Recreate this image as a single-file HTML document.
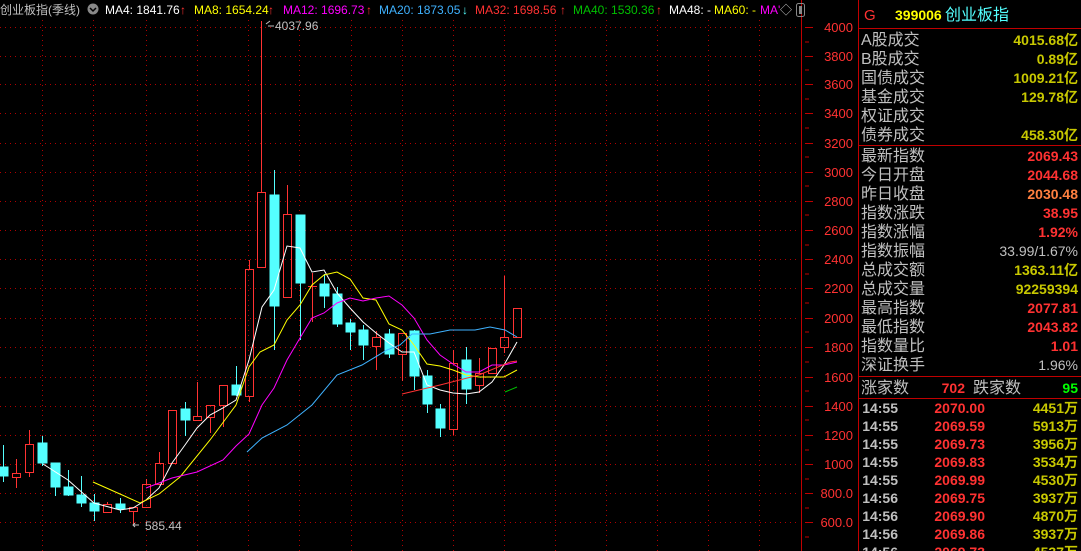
<!DOCTYPE html>
<html><head><meta charset="utf-8"><style>
html,body{margin:0;padding:0;background:#000;width:1081px;height:551px;overflow:hidden}
svg{display:block}
.h{font-family:"Liberation Sans","Noto Sans CJK SC",sans-serif;font-size:12px}
.lb{font-family:"Liberation Sans","Noto Sans CJK SC",sans-serif;font-size:16px;fill:#c0c0c0}
.v{font-family:"Liberation Sans","Noto Sans CJK SC",sans-serif;font-size:14px;font-weight:bold;text-anchor:end}
.ax{font-family:"Liberation Sans",sans-serif;font-size:13px;fill:#ff3232;text-anchor:end}
</style></head><body>
<svg width="1081" height="551" viewBox="0 0 1081 551" xmlns="http://www.w3.org/2000/svg">
<g stroke="#b00000" stroke-width="1" stroke-dasharray="1 4">
<path d="M0 27.5H800M0 56.5H800M0 84.5H800M0 113.5H800M0 143.5H800M0 172.5H800M0 201.5H800M0 230.5H800M0 259.5H800M0 288.5H800M0 318.5H800M0 347.5H800M0 377.5H800M0 406.5H800M0 435.5H800M0 464.5H800M0 493.5H800M0 522.5H800"/>
<path d="M42.5 20V551M93.5 20V551M146.5 20V551M197.5 20V551M248.5 20V551M299.5 20V551M351.5 20V551M402.5 20V551M453.5 20V551M504.5 20V551M555.5 20V551M606.5 20V551M657.5 20V551M708.5 20V551M759.5 20V551"/>
</g>
<path d="M801.5 0V551M858.5 0V551" stroke="#c00000"/>
<g stroke="#c00000"><path d="M805 27.5h8M805 56.5h8M805 84.5h8M805 113.5h8M805 143.5h8M805 172.5h8M805 201.5h8M805 230.5h8M805 259.5h8M805 288.5h8M805 318.5h8M805 347.5h8M805 377.5h8M805 406.5h8M805 435.5h8M805 464.5h8M805 493.5h8M805 522.5h8"/>
<path d="M805 42h4M805 70h4M805 99h4M805 128h4M805 157h4M805 186h4M805 215h4M805 245h4M805 274h4M805 303h4M805 332h4M805 362h4M805 391h4M805 420h4M805 450h4M805 479h4M805 508h4M805 537h4"/></g>
<g class="ax"><text x="853" y="32">4000</text><text x="853" y="61">3800</text><text x="853" y="89">3600</text><text x="853" y="118">3400</text><text x="853" y="148">3200</text><text x="853" y="177">3000</text><text x="853" y="206">2800</text><text x="853" y="235">2600</text><text x="853" y="264">2400</text><text x="853" y="293">2200</text><text x="853" y="323">2000</text><text x="853" y="352">1800</text><text x="853" y="382">1600</text><text x="853" y="411">1400</text><text x="853" y="440">1200</text><text x="853" y="469">1000</text><text x="853" y="498">800.0</text><text x="853" y="527">600.0</text></g>

<g stroke="#54ffff" fill="#54ffff">
<path d="M3.5 445V482M42.5 436V466M55.5 463V496M68.5 470V496M81.5 476V507M94.5 494V521M120.5 498V513M185.5 402V436M236.5 366V396M274.5 170V350M300.5 215V340M324.5 274V308M337.5 287V327M350.5 319V350M363.5 325V360M389.5 329V358M414.5 330V390M427.5 370V413M440.5 404V437M466.5 347V404"/>
<rect x="-1" y="467" width="9" height="9"/><rect x="38" y="443" width="9" height="20"/><rect x="51" y="463" width="9" height="24"/><rect x="64" y="487" width="9" height="8"/><rect x="77" y="495" width="9" height="8"/><rect x="90" y="503" width="9" height="8"/><rect x="116" y="504" width="9" height="5"/><rect x="181" y="409" width="9" height="11"/><rect x="232" y="385" width="9" height="10"/><rect x="270" y="195" width="9" height="111"/><rect x="296" y="215" width="9" height="68"/><rect x="320" y="284" width="9" height="12"/><rect x="333" y="294" width="9" height="30"/><rect x="346" y="323" width="9" height="9"/><rect x="359" y="330" width="9" height="15"/><rect x="385" y="334" width="9" height="20"/><rect x="410" y="331" width="9" height="45"/><rect x="423" y="376" width="9" height="28"/><rect x="436" y="409" width="9" height="19"/><rect x="462" y="360" width="9" height="29"/>
</g>
<g stroke="#ff3232" fill="none">
<path d="M16.5 459V473M16.5 477V488M29.5 430V444M29.5 472V477M107.5 502V504M133.5 511V525M146.5 479V484M159.5 452V463M197.5 382V416M210.5 417V433M223.5 405V427M249.5 260V269M249.5 396V402M261.5 21V192M287.5 185V214M312.5 273V322M308 286.5H317M376.5 331V337M376.5 346V370M402.5 354V381M453.5 350V363M453.5 429V435M479.5 358V373M479.5 385V393M504.5 276V337M504.5 347V353"/>
<rect x="12.5" y="473.5" width="8" height="4"/><rect x="25.5" y="444.5" width="8" height="28"/><rect x="103.5" y="504.5" width="8" height="8"/><rect x="129.5" y="507.5" width="8" height="4"/><rect x="142.5" y="484.5" width="8" height="23"/><rect x="155.5" y="463.5" width="8" height="21"/><rect x="168.5" y="410.5" width="8" height="53"/><rect x="193.5" y="416.5" width="8" height="4"/><rect x="206.5" y="405.5" width="8" height="12"/><rect x="219.5" y="385.5" width="8" height="20"/><rect x="245.5" y="269.5" width="8" height="127"/><rect x="257.5" y="192.5" width="8" height="75"/><rect x="283.5" y="214.5" width="8" height="83"/><rect x="372.5" y="337.5" width="8" height="9"/><rect x="398.5" y="333.5" width="8" height="21"/><rect x="449.5" y="363.5" width="8" height="66"/><rect x="475.5" y="373.5" width="8" height="12"/><rect x="488.5" y="348.5" width="8" height="25"/><rect x="500.5" y="337.5" width="8" height="10"/><rect x="513.5" y="308.5" width="8" height="29"/>
</g>
<path d="M488.5 347V349" stroke="#ff3232"/>
<g fill="none" stroke-width="1">
<polyline stroke="#ffffff" points="43,464 68,480 94,503 120,510 133,508 146,500 159,488 172,463 185,445 197,428 210,415 223,408 236,400 249,360 262,307 274,290 287,246 300,248 312,272 324,270 337,293 350,308 363,322 376,333 389,343 402,352 414,352 427,385 440,390 453,393 466,394 479,392 492,382 504,365 517,342"/>
<polyline stroke="#ffff00" points="93,482 120,494 140,503 159,494 180,477 210,440 236,405 249,367 260,352 274,345 287,320 300,305 312,285 324,275 337,272 350,279 363,298 376,300 389,324 402,330 414,345 427,364 440,366 453,370 466,375 479,377 492,377 504,377 517,370"/>
<polyline stroke="#ff00ff" points="146,488 172,478 197,472 223,460 236,446 249,434 262,405 274,388 287,360 300,338 312,318 324,313 337,303 350,298 363,301 376,298 389,296 402,305 414,318 427,340 440,355 453,364 466,372 479,372 492,365 504,365 517,362"/>
<polyline stroke="#3fb2ff" points="247,452 262,438 287,425 312,405 337,375 362,365 387,350 400,345 412,334 430,334 450,330 475,330 490,327 505,330 517,337"/>
<polyline stroke="#ff3232" points="402,394 440,385 479,375 510,362 517,361"/>
<polyline stroke="#00c000" points="505,392 517,387"/>
</g>
<path d="M266 24l4-3M268 26h6" stroke="#c0c0c0"/>
<text x="275" y="30" class="h" fill="#c0c0c0" font-size="13">4037.96</text>
<path d="M133 525h6M135 523l-2 2 2 2" stroke="#c0c0c0" fill="none"/>
<text x="145" y="530" class="h" fill="#c0c0c0" font-size="13">585.44</text>

<g class="h">
<text x="0" y="14" fill="#c0c0c0">创业板指(季线)</text>
<circle cx="93" cy="9" r="5.5" fill="#888"/><path d="M90 8l3 3 3-3" stroke="#000" fill="none" stroke-width="1.5"/>
<text x="105" y="14" fill="#fff">MA4: 1841.76</text><text x="180" y="14" fill="#ff3232">↑</text>
<text x="194" y="14" fill="#ffff00">MA8: 1654.24</text><text x="268" y="14" fill="#ff3232">↑</text>
<text x="283" y="14" fill="#ff00ff">MA12: 1696.73</text><text x="366" y="14" fill="#ff3232">↑</text>
<text x="379" y="14" fill="#3fb2ff">MA20: 1873.05</text><text x="462" y="14" fill="#54ffff">↓</text>
<text x="475" y="14" fill="#ff3232">MA32: 1698.56</text><text x="560" y="14" fill="#ff3232">↑</text>
<text x="573" y="14" fill="#00c000">MA40: 1530.36</text><text x="656" y="14" fill="#ff3232">↑</text>
<text x="669" y="14" fill="#fff">MA48: -</text>
<text x="714" y="14" fill="#ffff00">MA60: -</text>
<text x="760" y="14" fill="#ff00ff">MA'</text><text x="780" y="14" fill="#c0c0c0">◇</text>
</g>
<rect x="796.5" y="3.5" width="8" height="13" rx="2" fill="none" stroke="#888"/><rect x="799" y="6" width="3" height="8" fill="#888"/>

<path d="M859 28.5H1081M859 145.5H1081M859 376.5H1081M859 398.5H1081" stroke="#c00000"/>
<text x="864" y="20" font-family="Liberation Sans,sans-serif" font-size="15" fill="#ff3232">G</text>
<text x="895" y="20" font-family="Liberation Sans,sans-serif" font-size="14" font-weight="bold" fill="#ffff00">399006</text>
<text x="945" y="20" font-family="Liberation Sans,Noto Sans CJK SC,sans-serif" font-size="16" fill="#54ffff">创业板指</text>
<g class="lb">
<text x="861" y="45">A股成交</text><text x="861" y="64">B股成交</text><text x="861" y="83">国债成交</text><text x="861" y="102">基金成交</text><text x="861" y="121">权证成交</text><text x="861" y="140">债券成交</text>
<text x="861" y="161">最新指数</text><text x="861" y="180">今日开盘</text><text x="861" y="199">昨日收盘</text><text x="861" y="218">指数涨跌</text><text x="861" y="237">指数涨幅</text><text x="861" y="256">指数振幅</text><text x="861" y="275">总成交额</text><text x="861" y="294">总成交量</text><text x="861" y="313">最高指数</text><text x="861" y="332">最低指数</text><text x="861" y="351">指数量比</text><text x="861" y="370">深证换手</text>
<text x="861" y="393">涨家数</text><text x="973" y="393">跌家数</text>
</g>
<g class="v">
<text x="1078" y="45" fill="#c8c800">4015.68亿</text><text x="1078" y="64" fill="#c8c800">0.89亿</text><text x="1078" y="83" fill="#c8c800">1009.21亿</text><text x="1078" y="102" fill="#c8c800">129.78亿</text><text x="1078" y="140" fill="#c8c800">458.30亿</text>
<text x="1078" y="161" fill="#ff3232">2069.43</text><text x="1078" y="180" fill="#ff3232">2044.68</text><text x="1078" y="199" fill="#ff8040">2030.48</text><text x="1078" y="218" fill="#ff3232">38.95</text><text x="1078" y="237" fill="#ff3232">1.92%</text><text x="1078" y="256" fill="#c0c0c0" font-weight="normal">33.99/1.67%</text><text x="1078" y="275" fill="#c8c800">1363.11亿</text><text x="1078" y="294" fill="#c8c800">92259394</text><text x="1078" y="313" fill="#ff3232">2077.81</text><text x="1078" y="332" fill="#ff3232">2043.82</text><text x="1078" y="351" fill="#ff3232">1.01</text><text x="1078" y="370" fill="#c0c0c0" font-weight="normal">1.96%</text>
<text x="965" y="393" fill="#ff3232">702</text><text x="1078" y="393" fill="#00ff00">95</text>
</g>
<g class="v" font-size="13">
<text x="898" y="413" fill="#c0c0c0">14:55</text><text x="985" y="413" fill="#ff3232">2070.00</text><text x="1078" y="413" fill="#c8c800">4451万</text>
<text x="898" y="431" fill="#c0c0c0">14:55</text><text x="985" y="431" fill="#ff3232">2069.59</text><text x="1078" y="431" fill="#c8c800">5913万</text>
<text x="898" y="449" fill="#c0c0c0">14:55</text><text x="985" y="449" fill="#ff3232">2069.73</text><text x="1078" y="449" fill="#c8c800">3956万</text>
<text x="898" y="467" fill="#c0c0c0">14:55</text><text x="985" y="467" fill="#ff3232">2069.83</text><text x="1078" y="467" fill="#c8c800">3534万</text>
<text x="898" y="485" fill="#c0c0c0">14:55</text><text x="985" y="485" fill="#ff3232">2069.99</text><text x="1078" y="485" fill="#c8c800">4530万</text>
<text x="898" y="503" fill="#c0c0c0">14:56</text><text x="985" y="503" fill="#ff3232">2069.75</text><text x="1078" y="503" fill="#c8c800">3937万</text>
<text x="898" y="521" fill="#c0c0c0">14:56</text><text x="985" y="521" fill="#ff3232">2069.90</text><text x="1078" y="521" fill="#c8c800">4870万</text>
<text x="898" y="539" fill="#c0c0c0">14:56</text><text x="985" y="539" fill="#ff3232">2069.86</text><text x="1078" y="539" fill="#c8c800">3937万</text>
<text x="898" y="557" fill="#c0c0c0">14:56</text><text x="985" y="557" fill="#ff3232">2069.73</text><text x="1078" y="557" fill="#c8c800">4537万</text>
</g>
</svg>
</body></html>
